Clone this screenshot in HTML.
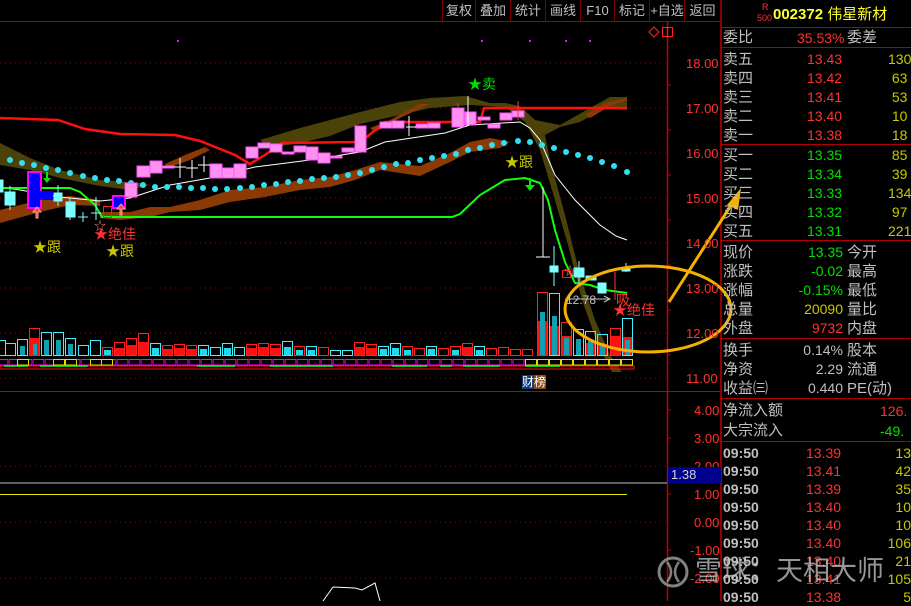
<!DOCTYPE html>
<html><head><meta charset="utf-8"><style>
*{margin:0;padding:0;box-sizing:border-box}
body{width:911px;height:601px;background:#000;overflow:hidden;position:relative;font-family:"Liberation Sans","Noto Sans CJK SC",sans-serif}
.t{position:absolute;white-space:nowrap;font-size:14px;line-height:16px}
.g{color:#c0c0c0}.r{color:#ff3232}.gr{color:#00e000}.y{color:#c8c800}
.tb{position:absolute;top:0;height:21px;border-right:1px solid #800000;color:#c0c0c0;font-size:13px;line-height:21px;text-align:center}
.rl{position:absolute;left:721px;width:190px;height:1px;background:#b00000}
</style></head><body>
<svg width="911" height="601" style="position:absolute;left:0;top:0">
<defs>
<pattern id="mb" x="-4" y="359" width="12" height="7" patternUnits="userSpaceOnUse"><rect x="1" y="0.5" width="11" height="5.5" fill="none" stroke="#ff00ff" stroke-width="1"/></pattern>
</defs>
<!-- grid -->
<g stroke="#a00000" stroke-dasharray="1,4" stroke-width="1">
<line x1="0" y1="63" x2="667" y2="63"/><line x1="0" y1="108" x2="667" y2="108"/><line x1="0" y1="153" x2="667" y2="153"/><line x1="0" y1="198" x2="667" y2="198"/><line x1="0" y1="243" x2="667" y2="243"/><line x1="0" y1="288" x2="667" y2="288"/><line x1="0" y1="333" x2="667" y2="333"/><line x1="0" y1="378" x2="667" y2="378"/>
<line x1="0" y1="466" x2="667" y2="466"/><line x1="0" y1="522" x2="667" y2="522"/><line x1="0" y1="578" x2="667" y2="578"/>
</g>
<line x1="0" y1="21.5" x2="720" y2="21.5" stroke="#a00000"/>
<line x1="0" y1="391.5" x2="720" y2="391.5" stroke="#c00000"/>
<line x1="667.5" y1="21" x2="667.5" y2="601" stroke="#c00000" stroke-width="1.5"/>
<line x1="721" y1="0" x2="721" y2="601" stroke="#c00000" stroke-width="1.5"/>
<!-- olive & brown bands -->
<polygon fill="#4a4208" points="0,143 30,158 60,170 100,180 140,183 150,185 130,190 100,186 60,178 30,170 0,165"/>
<polygon fill="#4a4208" points="260,140 300,128 330,120 360,112 400,102 430,98 465,96 490,103 505,103 520,106 535,120 560,125 590,108 610,97 627,97 627,110 605,108 580,122 560,127 545,135 550,160 565,215 580,275 595,320 610,355 622,372 612,372 598,345 582,300 568,245 552,190 540,150 525,122 505,107 470,105 430,108 400,115 360,124 330,136 300,143 270,148"/>
<polygon fill="#8b3a06" points="0,210 40,200 70,196 100,200 100,206 70,205 40,212 0,223"/>
<polygon fill="#8b3a06" points="100,212 130,212 150,207 170,207 200,200 230,190 265,187 300,180 330,177 355,170 380,162 420,166 450,153 470,142 490,138 510,142 500,148 470,152 450,162 420,176 380,170 355,180 330,187 300,190 265,197 230,202 200,210 170,212 150,217 120,220 100,218"/>
<polygon fill="#8b3a06" points="165,164 185,155 205,147 210,150 190,160 168,168"/>
<polygon fill="#8b3a06" points="370,128 390,120 420,104 430,104 400,118 375,132"/>
<polygon fill="#8b3a06" points="585,115 605,103 627,98 627,100 610,106 590,118"/>
<!-- red line -->
<polyline fill="none" stroke="#ff1010" stroke-width="2.5" points="0,118 58,120 85,129 120,134 175,135 200,141 235,155 250,164 265,155 282,143 360,142 368,136 385,122 480,122 484,108 627,108"/>
<!-- white MA -->
<polyline fill="none" stroke="#fff" stroke-width="1" points="0,187 20,190 60,197 100,201 130,198 170,185 210,178 255,167 310,160 360,152 385,142 445,133 470,125 520,122 530,128 540,140 555,175 575,200 600,225 616,236 627,240"/>
<!-- green line -->
<polyline fill="none" stroke="#10ff10" stroke-width="2" points="0,188 70,188 80,192 95,205 102,217 452,217 460,214 480,195 505,180 525,178 540,183 548,200 555,230 565,262 575,283 590,285 605,290 627,293"/>
<!-- cyan dots -->
<g fill="#30e0f0">
<circle cx="10" cy="160" r="3"/><circle cx="22" cy="163" r="3"/><circle cx="34" cy="165" r="3"/><circle cx="46" cy="168" r="3"/><circle cx="58" cy="170" r="3"/><circle cx="70" cy="173" r="3"/><circle cx="83" cy="176" r="3"/><circle cx="95" cy="178" r="3"/><circle cx="107" cy="180" r="3"/><circle cx="119" cy="181" r="3"/><circle cx="131" cy="183" r="3"/><circle cx="143" cy="185" r="3"/><circle cx="155" cy="187" r="3"/><circle cx="167" cy="187" r="3"/><circle cx="179" cy="187" r="3"/><circle cx="191" cy="188" r="3"/><circle cx="203" cy="188" r="3"/><circle cx="215" cy="189" r="3"/><circle cx="227" cy="189" r="3"/><circle cx="240" cy="188" r="3"/><circle cx="252" cy="187" r="3"/><circle cx="264" cy="185" r="3"/><circle cx="276" cy="184" r="3"/><circle cx="288" cy="182" r="3"/><circle cx="300" cy="181" r="3"/><circle cx="312" cy="179" r="3"/><circle cx="324" cy="178" r="3"/><circle cx="336" cy="177" r="3"/><circle cx="348" cy="175" r="3"/><circle cx="360" cy="173" r="3"/><circle cx="372" cy="170" r="3"/><circle cx="384" cy="167" r="3"/><circle cx="396" cy="164" r="3"/><circle cx="408" cy="163" r="3"/><circle cx="420" cy="160" r="3"/><circle cx="432" cy="158" r="3"/><circle cx="444" cy="156" r="3"/><circle cx="456" cy="154" r="3"/><circle cx="468" cy="150" r="3"/><circle cx="480" cy="148" r="3"/><circle cx="492" cy="145" r="3"/><circle cx="504" cy="143" r="3"/><circle cx="518" cy="141" r="3"/><circle cx="530" cy="142" r="3"/><circle cx="542" cy="145" r="3"/><circle cx="554" cy="148" r="3"/><circle cx="566" cy="152" r="3"/><circle cx="578" cy="155" r="3"/><circle cx="590" cy="158" r="3"/><circle cx="602" cy="162" r="3"/><circle cx="614" cy="166" r="3"/><circle cx="627" cy="172" r="3"/>
</g>
<!-- candles -->
<g stroke-width="1">
<g stroke="#80ffff" fill="#80ffff">
<rect x="-2" y="180" width="5" height="12"/><rect x="5" y="192" width="10" height="13"/><line x1="10" y1="186" x2="10" y2="210"/>
<rect x="54" y="193" width="8" height="8"/><line x1="58" y1="185" x2="58" y2="206"/>
<rect x="66" y="202" width="9" height="15"/><line x1="70" y1="198" x2="70" y2="220"/>
<line x1="78" y1="217" x2="88" y2="217"/><line x1="83" y1="212" x2="83" y2="222"/>
<line x1="91" y1="213" x2="101" y2="213"/><line x1="96" y1="197" x2="96" y2="220"/>
<rect x="550" y="266" width="8" height="6"/><line x1="554" y1="246" x2="554" y2="286"/>
<rect x="574" y="268" width="10" height="9"/><line x1="579" y1="261" x2="579" y2="284"/>
<rect x="586" y="276" width="10" height="4"/>
<rect x="598" y="283" width="8" height="10"/>
<rect x="622" y="268" width="8" height="3"/><line x1="626" y1="263" x2="626" y2="272"/>
</g>
<rect x="28" y="172" width="13" height="36" fill="#0000ff" stroke="#ff00ff" stroke-width="2"/>
<rect x="40" y="191" width="13" height="9" fill="#0000ff"/>
<rect x="113" y="196" width="12" height="12" fill="#0000ff" stroke="#ff00ff" stroke-width="2"/>
<rect x="103.5" y="206.5" width="8" height="11" fill="none" stroke="#ff2020"/>
<rect x="562.5" y="270.5" width="8" height="7" fill="none" stroke="#ff2020"/>
<line x1="543" y1="187" x2="543" y2="257" stroke="#fff"/><line x1="536" y1="257" x2="550" y2="257" stroke="#fff"/>
<g fill="#ff90f0" stroke="#ff50ff">
<rect x="125" y="183" width="12" height="14"/><rect x="137" y="166" width="13" height="11"/><rect x="150" y="161" width="12" height="12"/><rect x="162" y="166" width="12" height="2"/>
<rect x="210" y="164" width="12" height="14"/><rect x="222" y="168" width="12" height="10"/><rect x="234" y="164" width="12" height="14"/>
<rect x="246" y="147" width="12" height="11"/><rect x="258" y="143" width="12" height="5"/><rect x="270" y="144" width="12" height="8"/><rect x="282" y="152" width="12" height="2"/><rect x="294" y="146" width="12" height="6"/><rect x="306" y="147" width="12" height="13"/><rect x="318" y="153" width="12" height="10"/><rect x="330" y="156" width="12" height="2"/><rect x="342" y="148" width="12" height="4"/><rect x="355" y="126" width="11" height="26"/>
<rect x="380" y="122" width="12" height="6"/><rect x="392" y="121" width="12" height="7"/><rect x="416" y="124" width="12" height="4"/><rect x="428" y="123" width="12" height="5"/><rect x="452" y="108" width="12" height="19"/><rect x="465" y="112" width="11" height="13"/><rect x="478" y="117" width="12" height="3"/><rect x="488" y="124" width="12" height="4"/><rect x="500" y="113" width="12" height="7"/><rect x="512" y="111" width="12" height="6"/>
</g>
<g stroke="#fff"><line x1="174" y1="167" x2="186" y2="167"/><line x1="180" y1="158" x2="180" y2="178"/><line x1="186" y1="168" x2="198" y2="168"/><line x1="192" y1="160" x2="192" y2="178"/><line x1="198" y1="165" x2="210" y2="165"/><line x1="204" y1="156" x2="204" y2="172"/><line x1="406" y1="127" x2="416" y2="127"/><line x1="409" y1="116" x2="409" y2="136"/><line x1="468" y1="96" x2="468" y2="126"/></g>
<g stroke="#ff3030"><line x1="518" y1="101" x2="518" y2="120"/><line x1="458" y1="103" x2="458" y2="108"/><line x1="615" y1="272" x2="615" y2="300"/></g>
</g>
<!-- arrows on candles -->
<path d="M36 218 v-6 h-3 l4-5 4 5 h-3 v6z" fill="#ff4040" stroke="#ffa0a0"/>
<path d="M120 215 v-6 h-3 l4-5 4 5 h-3 v6z" fill="#ff4040" stroke="#ffa0a0"/>
<path d="M46 172 v6 h-3 l4 5 4-5 h-3 v-6z" fill="#10e010"/>
<path d="M529 178 v7 h-4 l5 6 5-6 h-4 v-7z" fill="#10e010"/>
<!-- volume -->
<g stroke-width="1">
<g fill="none" stroke="#40f0ff">
<rect x="-3.5" y="340.5" width="9" height="15"/><rect x="5.5" y="343.5" width="10" height="12"/><rect x="17.5" y="339.5" width="10" height="16"/><rect x="41.5" y="332.5" width="10" height="23"/><rect x="53.5" y="332.5" width="10" height="23"/><rect x="65.5" y="338.5" width="10" height="17"/><rect x="78.5" y="345.5" width="10" height="10"/><rect x="90.5" y="340.5" width="10" height="15"/><rect x="150.5" y="343.5" width="10" height="12"/><rect x="198.5" y="345.5" width="10" height="10"/><rect x="210.5" y="347.5" width="10" height="8"/><rect x="222.5" y="343.5" width="10" height="12"/><rect x="234.5" y="347.5" width="10" height="8"/><rect x="282.5" y="341.5" width="10" height="14"/><rect x="306.5" y="346.5" width="10" height="9"/><rect x="330.5" y="350.5" width="10" height="5"/><rect x="342.5" y="350.5" width="10" height="5"/><rect x="378.5" y="346.5" width="10" height="9"/><rect x="390.5" y="343.5" width="10" height="12"/><rect x="426.5" y="346.5" width="10" height="9"/><rect x="474.5" y="346.5" width="10" height="9"/><rect x="549.5" y="293.5" width="10" height="62"/><rect x="573.5" y="329.5" width="10" height="26"/><rect x="585.5" y="331.5" width="10" height="24"/><rect x="597.5" y="334.5" width="10" height="21"/><rect x="622.5" y="318.5" width="10" height="37"/>
</g>
<g fill="none" stroke="#ff2020">
<rect x="29.5" y="328.5" width="10" height="27"/><rect x="102.5" y="347.5" width="10" height="8"/><rect x="114.5" y="342.5" width="10" height="13"/><rect x="126.5" y="338.5" width="10" height="17"/><rect x="138.5" y="333.5" width="10" height="22"/><rect x="162.5" y="345.5" width="10" height="10"/><rect x="174.5" y="344.5" width="10" height="11"/><rect x="186.5" y="345.5" width="10" height="10"/><rect x="246.5" y="344.5" width="10" height="11"/><rect x="258.5" y="343.5" width="10" height="12"/><rect x="270.5" y="344.5" width="10" height="11"/><rect x="294.5" y="346.5" width="10" height="9"/><rect x="318.5" y="347.5" width="10" height="8"/><rect x="354.5" y="342.5" width="10" height="13"/><rect x="366.5" y="344.5" width="10" height="11"/><rect x="402.5" y="346.5" width="10" height="9"/><rect x="414.5" y="348.5" width="10" height="7"/><rect x="438.5" y="348.5" width="10" height="7"/><rect x="450.5" y="346.5" width="10" height="9"/><rect x="462.5" y="343.5" width="10" height="12"/><rect x="486.5" y="348.5" width="10" height="7"/><rect x="498.5" y="347.5" width="10" height="8"/><rect x="510.5" y="349.5" width="10" height="6"/><rect x="522.5" y="349.5" width="10" height="6"/><rect x="537.5" y="292.5" width="10" height="63"/><rect x="561.5" y="322.5" width="10" height="33"/><rect x="610.5" y="328.5" width="10" height="27"/>
</g>
<g fill="#ff1010"><rect x="30" y="338" width="9" height="17"/><rect x="115" y="348" width="9" height="7"/><rect x="127" y="345" width="9" height="10"/><rect x="139" y="342" width="9" height="13"/><rect x="163" y="349" width="9" height="6"/><rect x="175" y="348" width="9" height="7"/><rect x="187" y="349" width="9" height="6"/><rect x="247" y="348" width="9" height="7"/><rect x="259" y="347" width="9" height="8"/><rect x="271" y="348" width="9" height="7"/><rect x="355" y="347" width="9" height="8"/><rect x="367" y="348" width="9" height="7"/><rect x="463" y="347" width="9" height="8"/><rect x="538" y="321" width="9" height="34"/><rect x="562" y="336" width="9" height="19"/><rect x="611" y="336" width="9" height="19"/><rect x="550" y="326" width="9" height="29"/><rect x="586" y="343" width="9" height="12"/><rect x="598" y="344" width="9" height="11"/><rect x="623" y="337" width="9" height="18"/></g>
<g fill="#10a0b0"><rect x="20" y="346" width="5" height="9"/><rect x="44" y="340" width="5" height="15"/><rect x="56" y="340" width="5" height="15"/><rect x="68" y="344" width="5" height="11"/><rect x="33" y="344" width="4" height="11"/><rect x="540" y="312" width="5" height="43"/><rect x="552" y="316" width="5" height="39"/><rect x="564" y="338" width="5" height="17"/><rect x="576" y="339" width="5" height="16"/><rect x="588" y="341" width="5" height="14"/><rect x="600" y="343" width="5" height="12"/><rect x="625" y="340" width="5" height="15"/></g>
<g fill="#20d8e8"><rect x="152" y="348" width="7" height="7"/><rect x="284" y="347" width="7" height="8"/><rect x="380" y="349" width="7" height="6"/><rect x="392" y="348" width="7" height="7"/><rect x="428" y="349" width="7" height="6"/><rect x="476" y="350" width="7" height="5"/><rect x="200" y="349" width="7" height="6"/><rect x="224" y="348" width="7" height="7"/><rect x="308" y="350" width="7" height="5"/><rect x="104" y="350" width="7" height="5"/><rect x="296" y="350" width="7" height="5"/><rect x="404" y="350" width="7" height="5"/><rect x="452" y="350" width="7" height="5"/></g>
</g>
<!-- strip -->
<rect x="0" y="359" width="632" height="7" fill="url(#mb)"/>
<g fill="#000" stroke="#e0e000"><rect x="17.5" y="359.5" width="11" height="5.5"/><rect x="53.5" y="359.5" width="11" height="5.5"/><rect x="65.5" y="359.5" width="11" height="5.5"/><rect x="90.5" y="359.5" width="11" height="5.5"/><rect x="101.5" y="359.5" width="11" height="5.5"/>
<rect x="525.5" y="359.5" width="11" height="5.5"/><rect x="537.5" y="359.5" width="11" height="5.5"/><rect x="549.5" y="359.5" width="11" height="5.5"/><rect x="561.5" y="359.5" width="11" height="5.5"/><rect x="573.5" y="359.5" width="11" height="5.5"/><rect x="585.5" y="359.5" width="11" height="5.5"/><rect x="597.5" y="359.5" width="11" height="5.5"/><rect x="609.5" y="359.5" width="11" height="5.5"/><rect x="621.5" y="359.5" width="11" height="5.5"/></g>
<rect x="0" y="366" width="634" height="3" fill="none" stroke="#ff1010"/>
<g stroke="#10ff10" stroke-width="1.5"><line x1="4" y1="366" x2="28" y2="366"/><line x1="40" y1="366" x2="88" y2="366"/><line x1="197" y1="366" x2="235" y2="366"/><line x1="270" y1="366" x2="333" y2="366"/><line x1="392" y1="366" x2="427" y2="366"/><line x1="440" y1="366" x2="452" y2="366"/><line x1="463" y1="366" x2="500" y2="366"/><line x1="525" y1="366" x2="560" y2="366"/></g>
<!-- lower panel lines -->
<line x1="0" y1="483" x2="667" y2="483" stroke="#c0c0c0"/>
<line x1="0" y1="494.5" x2="627" y2="494.5" stroke="#e8e800"/>
<polyline fill="none" stroke="#fff" points="323,601 333,587 355,588 362,590 375,583 380,601"/>
<!-- axis ticks -->
<g stroke="#c00000"><line x1="667" y1="85" x2="671" y2="85"/><line x1="667" y1="130" x2="671" y2="130"/><line x1="667" y1="175" x2="671" y2="175"/><line x1="667" y1="220" x2="671" y2="220"/><line x1="667" y1="265" x2="671" y2="265"/><line x1="667" y1="310" x2="671" y2="310"/><line x1="667" y1="355" x2="671" y2="355"/><line x1="667" y1="410" x2="671" y2="410"/><line x1="667" y1="438" x2="671" y2="438"/><line x1="667" y1="494" x2="671" y2="494"/><line x1="667" y1="550" x2="671" y2="550"/></g>
<!-- purple dots -->
<g fill="#ff00ff"><rect x="177" y="40" width="2" height="2"/><rect x="481" y="40" width="2" height="2"/><rect x="529" y="40" width="2" height="2"/><rect x="565" y="40" width="2" height="2"/><rect x="589" y="40" width="2" height="2"/></g>
<path d="M649 32 l5-5 5 5 -5 5z" fill="none" stroke="#ff2020"/>
<rect x="662.5" y="27.5" width="10" height="9" fill="none" stroke="#ff2020"/><line x1="667.5" y1="27" x2="667.5" y2="37" stroke="#ff2020"/>
<!-- annotations -->
<line x1="565" y1="299" x2="610" y2="299" stroke="#c0c0c0"/><path d="M604 296 l6 3 -6 3" fill="none" stroke="#c0c0c0"/>
<!-- orange ellipse & arrow -->
<ellipse cx="648" cy="309" rx="83" ry="43" fill="none" stroke="#f5b000" stroke-width="3"/>
<line x1="669" y1="302" x2="737" y2="196" stroke="#f5b000" stroke-width="3"/>
<path d="M727 205 l14 -17 -3 22z" fill="#f5b000"/>
<!-- watermark logo -->
<circle cx="673" cy="572" r="14" fill="none" stroke="#a0a0a0" stroke-width="3" opacity="0.8"/>
<path d="M667 562 q8 10 0 20 M679 562 q-8 10 0 20" fill="none" stroke="#a0a0a0" stroke-width="2.5" opacity="0.8"/>
</svg>

<!-- chart labels -->
<div class="t y" style="left:33px;top:239px">★跟</div>
<div class="t y" style="left:106px;top:243px">★跟</div>
<div class="t y" style="left:505px;top:154px">★跟</div>
<div class="t gr" style="left:468px;top:76px">★卖</div>
<div class="t" style="left:94px;top:218px;color:#ff8080;font-size:12px">☆</div>
<div class="t r" style="left:94px;top:226px">★绝佳</div>
<div class="t" style="left:564px;top:263px;color:#ff8080;font-size:12px">☆</div>
<div class="t r" style="left:616px;top:292px">吸</div>
<div class="t r" style="left:613px;top:302px">★绝佳</div>
<div class="t g" style="left:566px;top:292px;font-size:12px">12.78</div>
<div class="t" style="left:522px;top:375px;font-size:12px;line-height:15px;color:#fff"><span style="background:#103a80">财</span><span style="background:#8a4a10">榜</span></div>
<!-- axis labels -->
<div class="t r" style="left:686px;top:56px;font-size:13px">18.00</div>
<div class="t r" style="left:686px;top:101px;font-size:13px">17.00</div>
<div class="t r" style="left:686px;top:146px;font-size:13px">16.00</div>
<div class="t r" style="left:686px;top:191px;font-size:13px">15.00</div>
<div class="t r" style="left:686px;top:236px;font-size:13px">14.00</div>
<div class="t r" style="left:686px;top:281px;font-size:13px">13.00</div>
<div class="t r" style="left:686px;top:326px;font-size:13px">12.00</div>
<div class="t r" style="left:686px;top:371px;font-size:13px">11.00</div>
<div class="t r" style="left:694px;top:403px;font-size:13px">4.00</div>
<div class="t r" style="left:694px;top:431px;font-size:13px">3.00</div>
<div class="t r" style="left:694px;top:459px;font-size:13px">2.00</div>
<div class="t r" style="left:694px;top:487px;font-size:13px">1.00</div>
<div class="t r" style="left:694px;top:515px;font-size:13px">0.00</div>
<div class="t r" style="left:690px;top:543px;font-size:13px">-1.00</div>
<div class="t r" style="left:690px;top:571px;font-size:13px">-2.00</div>
<div style="position:absolute;left:668px;top:467px;width:53px;height:16px;background:#000090;color:#d0d0d0;font-size:13px;line-height:16px;padding-left:3px">1.38</div>
<!-- toolbar -->
<div class="tb" style="left:442px;width:34px;border-left:1px solid #800000">复权</div>
<div class="tb" style="left:476px;width:35px">叠加</div>
<div class="tb" style="left:511px;width:35px">统计</div>
<div class="tb" style="left:546px;width:35px">画线</div>
<div class="tb" style="left:581px;width:34px">F10</div>
<div class="tb" style="left:615px;width:35px">标记</div>
<div class="tb" style="left:650px;width:35px">+自选</div>
<div class="tb" style="left:685px;width:36px">返回</div>
<!-- right panel -->
<div class="t r" style="left:762px;top:3px;font-size:9px;line-height:9px">R</div>
<div class="t r" style="left:757px;top:13px;font-size:9px;line-height:10px">500</div>
<div class="t" style="left:773px;top:6px;color:#ffff30;font-size:15px;line-height:18px;font-weight:bold">002372 <span style="font-weight:normal">伟星新材</span></div>
<div class="rl" style="top:27px"></div>
<div class="t g" style="left:723px;top:30px;font-size:15px">委比</div><div class="t r" style="left:797px;top:30px">35.53%</div><div class="t g" style="left:847px;top:30px;font-size:15px">委差</div>
<div class="rl" style="top:47px"></div>
<div class="t g" style="left:723px;top:50px;font-size:15px;line-height:19px">卖五<br>卖四<br>卖三<br>卖二<br>卖一</div>
<div class="t r" style="left:807px;top:50px;line-height:19px">13.43<br>13.42<br>13.41<br>13.40<br>13.38</div>
<div class="t y" style="left:888px;top:50px;line-height:19px">130<br>&nbsp;63<br>&nbsp;53<br>&nbsp;10<br>&nbsp;18</div>
<div class="rl" style="top:144px"></div>
<div class="t g" style="left:723px;top:146px;font-size:15px;line-height:19px">买一<br>买二<br>买三<br>买四<br>买五</div>
<div class="t gr" style="left:807px;top:146px;line-height:19px">13.35<br>13.34<br>13.33<br>13.32<br>13.31</div>
<div class="t y" style="left:888px;top:146px;line-height:19px">&nbsp;85<br>&nbsp;39<br>134<br>&nbsp;97<br>221</div>
<div class="rl" style="top:240px"></div>
<div class="t g" style="left:723px;top:243px;font-size:15px;line-height:19px">现价<br>涨跌<br>涨幅<br>总量<br>外盘</div>
<div class="t" style="left:780px;top:243px;line-height:19px;text-align:right;width:63px"><span class="gr">13.35</span><br><span class="gr">-0.02</span><br><span class="gr">-0.15%</span><br><span class="y">20090</span><br><span class="r">9732</span></div>
<div class="t g" style="left:847px;top:243px;font-size:15px;line-height:19px">今开<br>最高<br>最低<br>量比<br>内盘</div>
<div class="rl" style="top:338px"></div>
<div class="t g" style="left:723px;top:341px;font-size:15px;line-height:19px">换手<br>净资<br>收益㈢</div>
<div class="t g" style="left:780px;top:341px;line-height:19px;text-align:right;width:63px">0.14%<br>2.29<br>0.440</div>
<div class="t g" style="left:847px;top:341px;font-size:15px;line-height:19px">股本<br>流通<br>PE(动)</div>
<div class="rl" style="top:398px"></div>
<div class="t g" style="left:723px;top:401px;font-size:15px;line-height:20px">净流入额<br>大宗流入</div>
<div class="t" style="left:880px;top:401px;line-height:20px"><span class="r">126.</span><br><span class="gr">-49.</span></div>
<div class="rl" style="top:441px"></div>
<div class="t g" style="left:723px;top:444px;line-height:18px;font-weight:bold">09:50<br>09:50<br>09:50<br>09:50<br>09:50<br>09:50<br>09:50<br>09:50<br>09:50</div>
<div class="t r" style="left:806px;top:444px;line-height:18px">13.39<br>13.41<br>13.39<br>13.40<br>13.40<br>13.40<br>13.40<br>13.41<br>13.38</div>
<div class="t y" style="left:884px;top:444px;line-height:18px;text-align:right;width:27px">13<br>42<br>35<br>10<br>10<br>106<br>21<br>105<br>5</div>
<!-- watermark -->
<div class="t" style="left:695px;top:555px;font-size:27px;line-height:32px;color:rgba(200,200,200,0.75)">雪球：天相大师</div>
</body></html>
